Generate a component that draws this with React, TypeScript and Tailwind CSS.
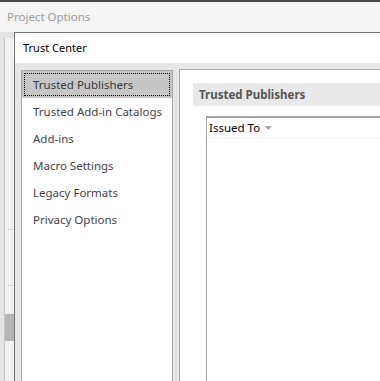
import React from "react";

const navItems = [
  "Trusted Publishers",
  "Trusted Add-in Catalogs",
  "Add-ins",
  "Macro Settings",
  "Legacy Formats",
  "Privacy Options",
];

const NavItem = ({ title, active }: { title: string; active?: boolean }) => {
  if (active) {
    return (
      <div className="h-[27px] bg-[#c6c6c6] p-[2px]">
        <div className="h-full border border-dotted border-black flex items-center pl-[8px] text-[#3a3a3a]">
          {title}
        </div>
      </div>
    );
  }
  return (
    <div className="h-[27px] flex items-center pl-[11px] text-[#3f3f4a]">
      {title}
    </div>
  );
};

const App = () => {
  return (
    <div
      className="w-[380px] h-[381px] overflow-hidden flex flex-col bg-[#e3e3e3] text-[11.5px]"
      style={{ fontFamily: '"Noto Sans", "Open Sans", sans-serif' }}
    >
      {/* background window title */}
      <div className="h-[2px] bg-[#4a4a4a]" />
      <div className="h-[30px] bg-[#f5f5f5] flex items-center pl-[7px] text-[11.5px] text-[#9c9c9c]">
        Project Options
      </div>

      <div className="flex flex-1 min-h-0">
        {/* background scroll strip */}
        <div className="w-[14px] flex flex-col pt-[6px]">
          <div className="flex-1 ml-[4px] border-l border-[#c4c4c4] bg-[#f1f1f1] flex flex-col">
            <div className="h-[191px]" />
            <div className="h-px ml-[3px] bg-[#d6d6d6]" />
            <div className="h-[55px]" />
            <div className="h-px ml-[3px] bg-[#d6d6d6]" />
            <div className="h-[28px]" />
            <div className="h-[27px] bg-[#b5b5b5]" />
          </div>
        </div>

        {/* Trust Center dialog */}
        <div className="flex-1 flex flex-col border-l border-t border-[#707070] min-w-0">
          <div className="h-[30px] bg-white flex items-center pl-[8px] text-[11px] text-black shrink-0">
            Trust Center
          </div>
          <div className="flex-1 flex bg-[#e6e6e6] pl-[6px]">
            <div className="w-[152px] mt-[7px] border border-b-0 border-[#a9a9a9] bg-white flex flex-col shrink-0">
              {navItems.map((item, i) => (
                <NavItem key={item} title={item} active={i === 0} />
              ))}
            </div>
            <div className="flex-1 ml-[6px] mt-[6px] border-l border-t border-[#a9a9a9] bg-white pl-[13px] pt-[13px] flex flex-col min-w-0">
              <div className="h-[23px] bg-[#e9e9e9] flex items-center pl-[6px] font-bold text-[#555555] whitespace-nowrap">
                Trusted Publishers
              </div>
              <div className="flex-1 mt-[10px] ml-[13px] border-l border-t-2 border-[#a6a6a6] flex flex-col">
                <div className="h-[20px] flex items-center pl-[2px] text-black border-b border-[#f2f2f2]">
                  <span>Issued To</span>
                  <svg width="9" height="6" viewBox="0 0 9 6" className="ml-[4px] mt-[1px]">
                    <path d="M0.5 1 L8 1 L4.25 5 Z" fill="#a8a8a8" />
                  </svg>
                </div>
              </div>
            </div>
          </div>
        </div>
      </div>
    </div>
  );
};

export default App;
